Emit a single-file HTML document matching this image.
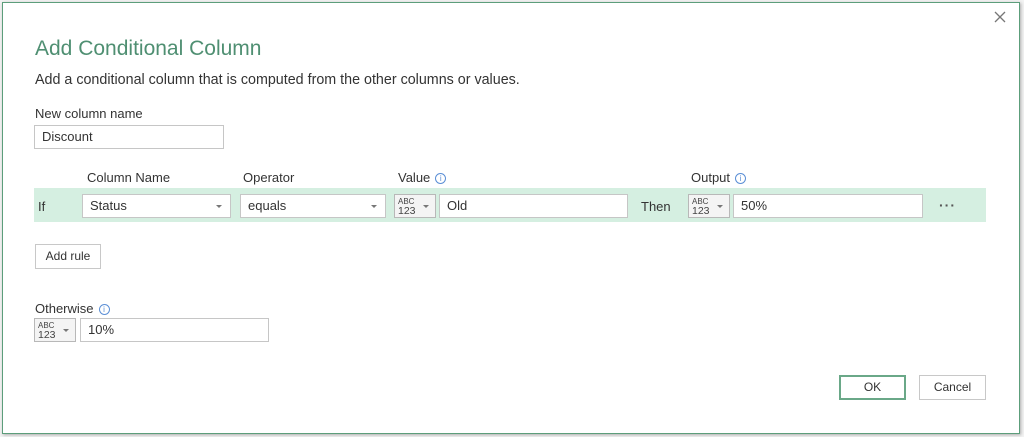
<!DOCTYPE html>
<html><head><style>
body{margin:0;width:1024px;height:437px;background:#f3f3f3;font-family:"Liberation Sans",sans-serif;position:relative;overflow:hidden}
#d{position:absolute;left:2px;top:2px;width:1016px;height:430px;background:#fff;border:1px solid #5c9e7b;box-shadow:1px 1px 3px #aaa}
.a{position:absolute;font-size:13px;color:#333;white-space:nowrap}
.box{position:absolute;border:1px solid #c6c6c6;background:#fff;box-sizing:border-box;font-size:13px;color:#333;padding-left:7px;line-height:22px}
.dd::after{content:"";position:absolute;right:8px;top:10px;border-left:3px solid transparent;border-right:3px solid transparent;border-top:3px solid #777}
.abc{position:absolute;border:1px solid #b8b8b8;background:#f4f4f4;box-sizing:border-box;font-size:8px;line-height:8px;color:#444;padding:3px 0 0 3px}
.abc b{font-weight:normal;font-size:10.5px;line-height:10px}
.abc::after{content:"";position:absolute;right:6px;top:10px;border-left:3px solid transparent;border-right:3px solid transparent;border-top:3px solid #777}
.i{display:inline-block;width:9px;height:9px;border:1px solid #5b8fd6;border-radius:50%;font-size:8px;line-height:9px;text-align:center;color:#5b8fd6;margin-left:5px;vertical-align:1px}
.btn{position:absolute;border:1px solid #c8c8c8;background:#fff;box-sizing:border-box;font-size:12px;text-align:center;line-height:22px;color:#333}
</style></head><body>
<div id="d"></div>
<div class="a" style="left:35px;top:37px;font-size:21px;color:#4f8f72">Add Conditional Column</div>
<div class="a" style="left:35px;top:72px;font-size:14.3px">Add a conditional column that is computed from the other columns or values.</div>
<div class="a" style="left:35px;top:106px">New column name</div>
<div class="box" style="left:34px;top:125px;width:190px;height:24px">Discount</div>
<div class="a" style="left:87px;top:170px">Column Name</div>
<div class="a" style="left:243px;top:170px">Operator</div>
<div class="a" style="left:398px;top:170px">Value<span class="i">i</span></div>
<div class="a" style="left:691px;top:170px">Output<span class="i">i</span></div>
<div style="position:absolute;left:34px;top:188px;width:952px;height:34px;background:#d5efe1"></div>
<div class="a" style="left:38px;top:199px">If</div>
<div class="box dd" style="left:82px;top:194px;width:149px;height:24px">Status</div>
<div class="box dd" style="left:240px;top:194px;width:146px;height:24px">equals</div>
<div class="abc" style="left:394px;top:194px;width:42px;height:24px">ABC<br><b>123</b></div>
<div class="box" style="left:439px;top:194px;width:189px;height:24px">Old</div>
<div class="a" style="left:641px;top:199px">Then</div>
<div class="abc" style="left:688px;top:194px;width:42px;height:24px">ABC<br><b>123</b></div>
<div class="box" style="left:733px;top:194px;width:190px;height:24px">50%</div>
<div class="a" style="left:939px;top:197px;font-size:14px;font-weight:bold;letter-spacing:1px;color:#555">···</div>
<div class="btn" style="left:35px;top:244px;width:66px;height:25px">Add rule</div>
<div class="a" style="left:35px;top:301px">Otherwise<span class="i">i</span></div>
<div class="abc" style="left:34px;top:318px;width:42px;height:24px">ABC<br><b>123</b></div>
<div class="box" style="left:80px;top:318px;width:189px;height:24px">10%</div>
<div class="btn" style="left:839px;top:375px;width:67px;height:25px;border:2px solid #6aa888;line-height:21px">OK</div>
<div class="btn" style="left:919px;top:375px;width:67px;height:25px">Cancel</div>
<svg style="position:absolute;left:994px;top:11px" width="12" height="12"><path d="M1 1L11 11M11 1L1 11" stroke="#777" stroke-width="1.3"/></svg>
</body></html>
